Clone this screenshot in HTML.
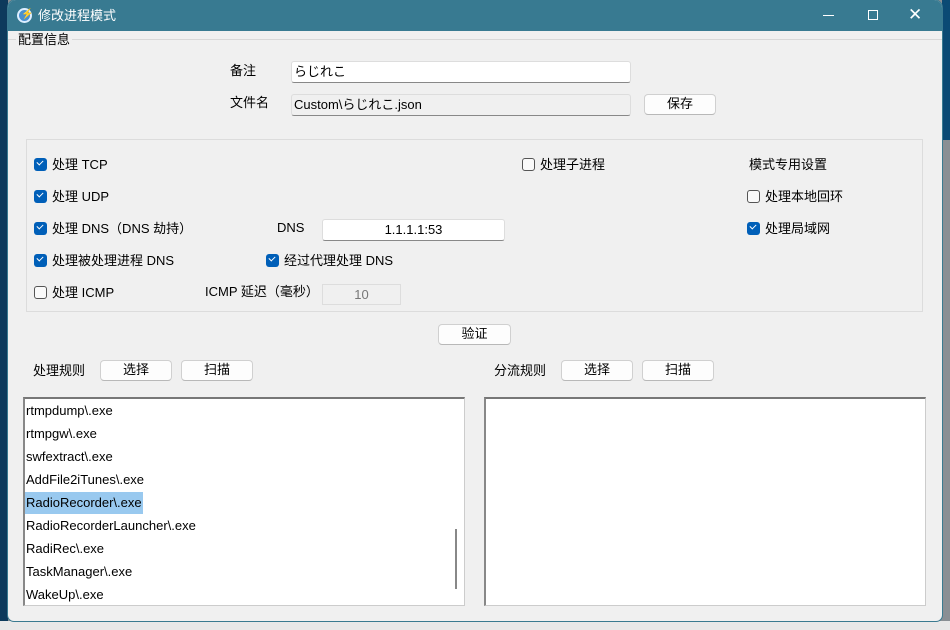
<!DOCTYPE html>
<html><head><meta charset="utf-8"><style>
*{box-sizing:border-box;margin:0;padding:0}
body{width:950px;height:630px;overflow:hidden;background:#8a8f94;font-family:"Segoe UI","Liberation Sans","Noto Sans CJK SC",sans-serif;font-size:13px;line-height:15px;color:#000;position:relative}
.a{position:absolute}
.win{left:8px;top:0;width:934px;height:621px;background:#f0f0f0;box-shadow:0 0 0 1px #3a7a90;border-radius:8px 8px 6px 6px;overflow:hidden}
.title{left:0;top:0;width:100%;height:31px;background:#387a91;color:#fff;font-size:13px}
.tb{background:#fff;border:1px solid #ddd;border-bottom:1px solid #888;border-radius:3px;height:22px;padding:2px 0 0 2px;line-height:16px}
.btn{background:#fdfdfd;border:1px solid #d0d0d0;border-bottom-color:#b8b8b8;border-radius:4px;height:21px;text-align:center;line-height:18px}
.cb{width:13px;height:13px;border-radius:3px;background:#005fb8}
.cb::after{content:"";position:absolute;left:3px;top:2px;width:5px;height:3px;border-left:1.3px solid #fff;border-bottom:1.3px solid #fff;transform:rotate(-45deg)}
.cu{width:13px;height:13px;border-radius:3px;border:1px solid #555;background:#fafafa}
.list{background:#fff;border:1px solid #ccc;border-top:2px solid #777;border-left:2px solid #888}
.it{position:absolute;left:0;height:22px;line-height:21px;padding:0 1px}
</style></head><body>
<div class="a" style="left:0;top:0;width:8px;height:630px;background:#0d3a5c"></div>
<div class="a" style="left:942px;top:0;width:8px;height:140px;background:#0b4a74"></div>
<div class="a" style="left:0;top:621px;width:950px;height:9px;background:#e8e8e8"></div>
<div class="a win">
 <div class="a title">
  <div class="a" style="left:9px;top:8px;width:15px;height:15px;border-radius:50%;background:#4a8fd0;border:2px solid #ddeeff"></div>
  <div class="a" style="left:13px;top:10px;color:#f6c342;font-size:10px;line-height:10px">⚡</div>
  <div class="a" style="left:30px;top:8px">修改进程模式</div>
  <div class="a" style="left:815px;top:15px;width:11px;height:1px;background:#fff"></div>
  <div class="a" style="left:860px;top:10px;width:10px;height:10px;border:1px solid #fff"></div>
  <div class="a" style="left:900px;top:6px;font-size:17px;line-height:18px;color:#fff">✕</div>
 </div>
 <div class="a" style="left:0;top:39px;width:934px;height:1px;background:#d8d8d8"></div>
 <div class="a" style="left:8px;top:32px;background:#f0f0f0;padding:0 2px">配置信息</div>
 <div class="a" style="left:222px;top:63px">备注</div>
 <div class="a tb" style="left:283px;top:61px;width:340px">らじれこ</div>
 <div class="a" style="left:222px;top:95px">文件名</div>
 <div class="a tb" style="left:283px;top:94px;width:340px;background:#f0f0f0">Custom\らじれこ.json</div>
 <div class="a btn" style="left:636px;top:94px;width:72px">保存</div>

 <div class="a" style="left:18px;top:139px;width:897px;height:173px;border:1px solid #dcdcdc"></div>
 <div class="a cb" style="left:26px;top:158px"></div><div class="a" style="left:44px;top:157px">处理 TCP</div>
 <div class="a cb" style="left:26px;top:190px"></div><div class="a" style="left:44px;top:189px">处理 UDP</div>
 <div class="a cb" style="left:26px;top:222px"></div><div class="a" style="left:44px;top:221px">处理 DNS（DNS 劫持）</div>
 <div class="a cb" style="left:26px;top:254px"></div><div class="a" style="left:44px;top:253px">处理被处理进程 DNS</div>
 <div class="a cu" style="left:26px;top:286px"></div><div class="a" style="left:44px;top:285px">处理 ICMP</div>
 <div class="a" style="left:269px;top:220px">DNS</div>
 <div class="a tb" style="left:314px;top:219px;width:183px;text-align:center;padding:2px 0 0">1.1.1.1:53</div>
 <div class="a cb" style="left:258px;top:254px"></div><div class="a" style="left:276px;top:253px">经过代理处理 DNS</div>
 <div class="a" style="left:197px;top:284px">ICMP 延迟（毫秒）</div>
 <div class="a" style="left:314px;top:284px;width:79px;height:21px;border:1px solid #ddd;background:#f0f0f0;color:#777;text-align:center;line-height:19px">10</div>
 <div class="a cu" style="left:514px;top:158px"></div><div class="a" style="left:532px;top:157px">处理子进程</div>
 <div class="a" style="left:741px;top:157px">模式专用设置</div>
 <div class="a cu" style="left:739px;top:190px"></div><div class="a" style="left:757px;top:189px">处理本地回环</div>
 <div class="a cb" style="left:739px;top:222px"></div><div class="a" style="left:757px;top:221px">处理局域网</div>

 <div class="a btn" style="left:430px;top:324px;width:73px">验证</div>
 <div class="a" style="left:25px;top:363px">处理规则</div>
 <div class="a btn" style="left:92px;top:360px;width:72px">选择</div>
 <div class="a btn" style="left:173px;top:360px;width:72px">扫描</div>
 <div class="a" style="left:486px;top:363px">分流规则</div>
 <div class="a btn" style="left:553px;top:360px;width:72px">选择</div>
 <div class="a btn" style="left:634px;top:360px;width:72px">扫描</div>

 <div class="a list" style="left:15px;top:397px;width:442px;height:209px">
  <div class="it" style="top:1px">rtmpdump\.exe</div>
  <div class="it" style="top:24px">rtmpgw\.exe</div>
  <div class="it" style="top:47px">swfextract\.exe</div>
  <div class="it" style="top:70px">AddFile2iTunes\.exe</div>
  <div class="it" style="top:93px;background:#99c9ef">RadioRecorder\.exe</div>
  <div class="it" style="top:116px">RadioRecorderLauncher\.exe</div>
  <div class="it" style="top:139px">RadiRec\.exe</div>
  <div class="it" style="top:162px">TaskManager\.exe</div>
  <div class="it" style="top:185px">WakeUp\.exe</div>
  <div class="a" style="left:430px;top:130px;width:2px;height:60px;background:#888"></div>
 </div>
 <div class="a list" style="left:476px;top:397px;width:442px;height:209px"></div>
</div>
</body></html>
